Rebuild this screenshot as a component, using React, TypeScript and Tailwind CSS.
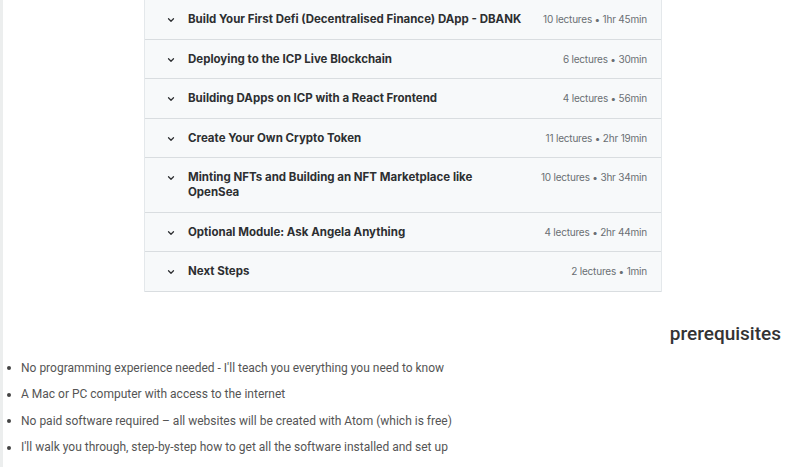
import { ChevronDown } from "lucide-react";

const sections = [
  { title: "Build Your First Defi (Decentralised Finance) DApp - DBANK", meta: "10 lectures • 1hr 45min" },
  { title: "Deploying to the ICP Live Blockchain", meta: "6 lectures • 30min" },
  { title: "Building DApps on ICP with a React Frontend", meta: "4 lectures • 56min" },
  { title: "Create Your Own Crypto Token", meta: "11 lectures • 2hr 19min" },
  { title: "Minting NFTs and Building an NFT Marketplace like\nOpenSea", meta: "10 lectures • 3hr 34min" },
  { title: "Optional Module: Ask Angela Anything", meta: "4 lectures • 2hr 44min" },
  { title: "Next Steps", meta: "2 lectures • 1min" },
];

const prereqs = [
  "No programming experience needed - I'll teach you everything you need to know",
  "A Mac or PC computer with access to the internet",
  "No paid software required – all websites will be created with Atom (which is free)",
  "I'll walk you through, step-by-step how to get all the software installed and set up",
];

export default function App() {
  return (
    <div className="flex h-[467px] w-[794px] overflow-hidden bg-white">
      {/* left edge strip */}
      <div className="w-[3px] shrink-0 bg-[#eceeee]" />

      <div className="flex flex-1 flex-col">
        {/* curriculum accordion */}
        <div className="ml-[141px] w-[518px] border-x border-[#e4e8eb] bg-[#f7f9fa] font-['Inter',sans-serif] text-[#2d2f31]">
          {sections.map((s) => (
            <div
              key={s.title}
              className="flex items-start border-b border-[#d9dde0] pt-[12.25px] pb-[11.25px] pl-[21px] pr-[14px]"
            >
              <ChevronDown className="mr-[12px] mt-[3px] h-[10px] w-[10px] shrink-0 text-[#2d2f31]" strokeWidth={3} />
              <div className="flex-1 whitespace-pre-line text-[11.5px] font-bold leading-[15px]">{s.title}</div>
              <div className="ml-3 shrink-0 text-[10px] leading-[15px] tracking-[-0.2px] text-[#6a6f73]">{s.meta}</div>
            </div>
          ))}
        </div>

        {/* prerequisites */}
        <div className="mt-[30px] pr-[13px] text-right font-['Roboto',sans-serif] text-[19px] font-medium leading-[24px] text-[#333]">
          prerequisites
        </div>
        <ul className="mt-[15px] flex flex-col gap-[11px] font-['Roboto',sans-serif] text-[12px] leading-[15.5px] text-[#555]">
          {prereqs.map((p) => (
            <li key={p} className="flex items-center">
              <span className="ml-[4px] mr-[10px] h-[4px] w-[4px] rounded-full bg-[#444]" />
              {p}
            </li>
          ))}
        </ul>
      </div>
    </div>
  );
}
